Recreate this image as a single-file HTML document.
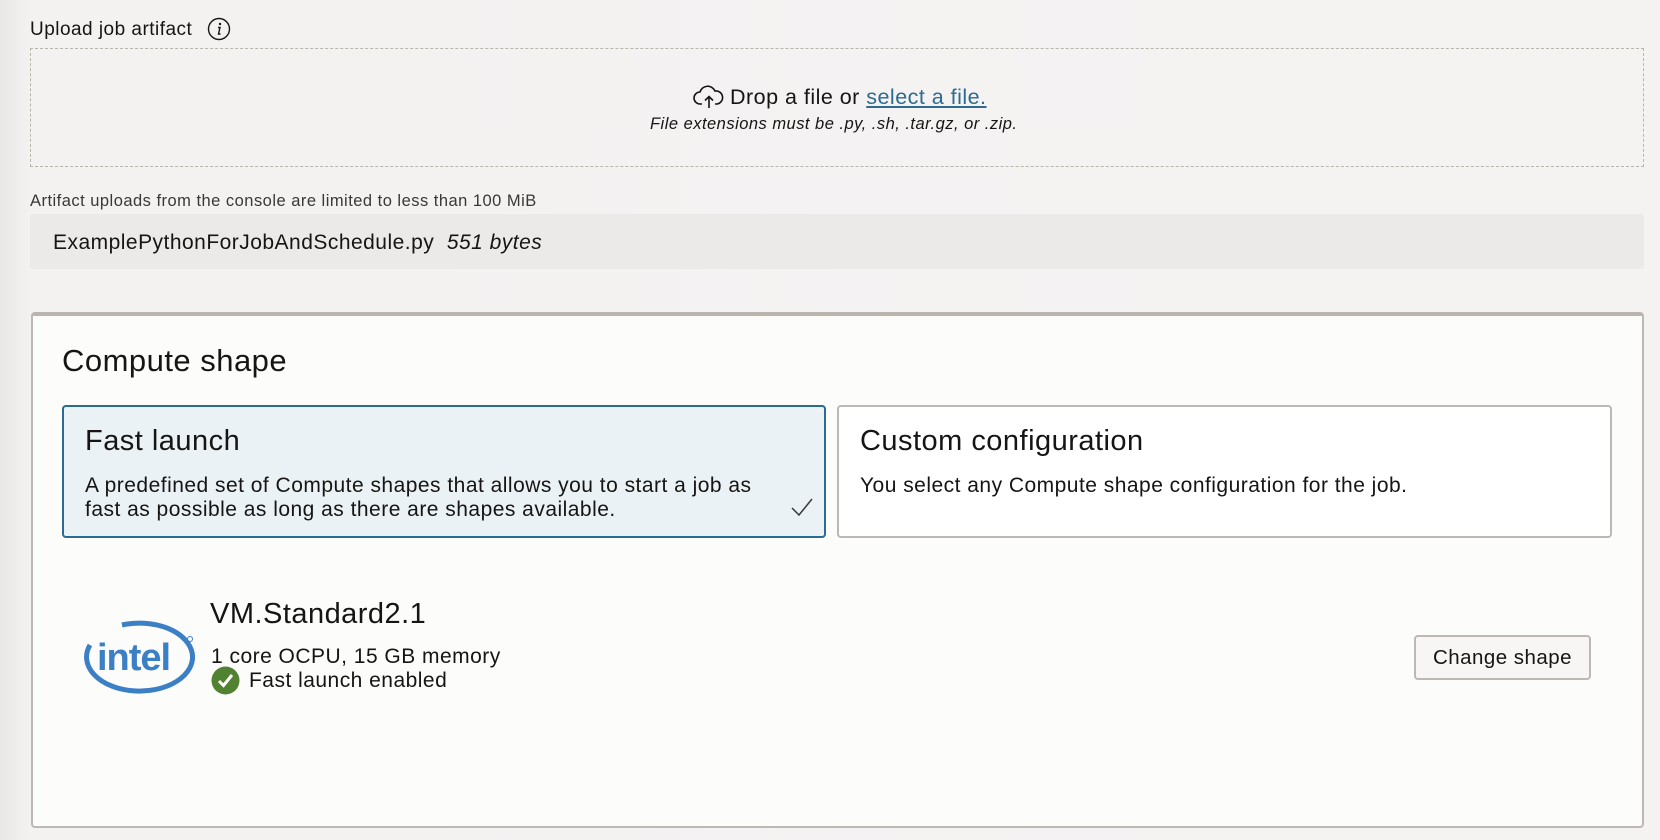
<!DOCTYPE html>
<html><head><meta charset="utf-8"><style>
*{box-sizing:border-box;margin:0;padding:0}
body{width:1660px;height:840px;overflow:hidden;background:linear-gradient(to right,#e9e8e7 0,#f3f2f1 30px,#f4f3f2 100%);font-family:"Liberation Sans",sans-serif;color:#161513;position:relative;letter-spacing:0.03em}
.a{position:absolute;white-space:nowrap}
</style></head><body>
<div class="a" style="left:30px;top:19px;font-size:19px">Upload job artifact</div>
<svg class="a" style="left:207px;top:17px" width="24" height="24" viewBox="0 0 24 24"><circle cx="12" cy="12" r="10.5" fill="none" stroke="#161513" stroke-width="1.4"/><circle cx="13" cy="7" r="1.2" fill="#161513"/><path d="M11 10.5h2l-1.5 6.5h2" fill="none" stroke="#161513" stroke-width="1.4"/></svg>
<div class="a" style="left:30px;top:48px;width:1614px;height:119px;border:1.5px dashed #b9b4ae"></div>
<svg class="a" style="left:693px;top:84px" width="32" height="26" viewBox="0 0 32 26"><path d="M9 20H7a6 6 0 0 1 0-12 8 8 0 0 1 15-1 6.5 6.5 0 0 1 2 13h-2" fill="none" stroke="#161513" stroke-width="1.6"/><path d="M16 24V13M12 16.5l4-4 4 4" fill="none" stroke="#161513" stroke-width="1.6"/></svg>
<div class="a" style="left:730px;top:85px;font-size:21.5px">Drop a file or <span style="color:#2d6a8f;text-decoration:underline">select a file.</span></div>
<div class="a" style="left:650px;top:115px;font-size:16.5px;font-style:italic">File extensions must be .py, .sh, .tar.gz, or .zip.</div>
<div class="a" style="left:30px;top:192px;font-size:16.5px;color:#3a3836">Artifact uploads from the console are limited to less than 100 MiB</div>
<div class="a" style="left:30px;top:214px;width:1614px;height:55px;background:#ebeae9;border-radius:3px"></div>
<div class="a" style="left:53px;top:231px;font-size:21px">ExamplePythonForJobAndSchedule.py&nbsp; <i>551 bytes</i></div>
<div class="a" style="left:31px;top:312px;width:1613px;height:516px;background:#fcfcfb;border:2px solid #bdb8b3;border-top:4px solid #bbb5b0;border-radius:4px"></div>
<div class="a" style="left:62px;top:343px;font-size:31px">Compute shape</div>
<div class="a" style="left:62px;top:405px;width:764px;height:133px;background:#eaf2f6;border:2px solid #2d6a8f;border-radius:4px"></div>
<div class="a" style="left:85px;top:425px;font-size:29px">Fast launch</div>
<div class="a" style="left:85px;top:474px;font-size:21px;line-height:24px">A predefined set of Compute shapes that allows you to start a job as<br>fast as possible as long as there are shapes available.</div>
<svg class="a" style="left:790px;top:496px" width="24" height="22" viewBox="0 0 24 22"><path d="M2 12l7 7L22 3" fill="none" stroke="#3a3836" stroke-width="1.5"/></svg>
<div class="a" style="left:837px;top:405px;width:775px;height:133px;border:2px solid #bdb8b3;border-radius:4px;background:#fff"></div>
<div class="a" style="left:860px;top:425px;font-size:29px">Custom configuration</div>
<div class="a" style="left:860px;top:474px;font-size:21px">You select any Compute shape configuration for the job.</div>
<svg class="a" style="left:82px;top:617px" width="116" height="80" viewBox="0 0 116 80"><path d="M40 8A53 34 0 1 1 8 28" fill="none" stroke="#3b7fc4" stroke-width="5"/><text x="15" y="53" font-family="Liberation Sans,sans-serif" font-weight="bold" font-size="38" fill="#3b7fc4" letter-spacing="-1">intel</text><circle cx="108" cy="22" r="2.5" fill="none" stroke="#3b7fc4" stroke-width="1"/></svg>
<div class="a" style="left:210px;top:598px;font-size:29px">VM.Standard2.1</div>
<div class="a" style="left:211px;top:645px;font-size:21px">1 core OCPU, 15 GB memory</div>
<svg class="a" style="left:211px;top:666px" width="29" height="29" viewBox="0 0 29 29"><circle cx="14.5" cy="14.5" r="14" fill="#508232"/><path d="M8 15l4.5 4.5L21 9" fill="none" stroke="#fff" stroke-width="3"/></svg>
<div class="a" style="left:249px;top:669px;font-size:21px">Fast launch enabled</div>
<div class="a" style="left:1414px;top:635px;width:177px;height:45px;border:2px solid #bdb8b3;border-radius:4px;background:#f7f6f5;font-size:20.5px;text-align:center;line-height:41px">Change shape</div>
</body></html>
